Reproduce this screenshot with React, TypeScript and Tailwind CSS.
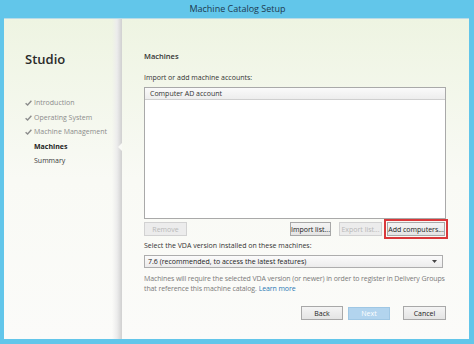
import React from "react";

const Check = () => (
  <svg width="7" height="6" viewBox="0 0 7 6" className="mr-[2px]">
    <path d="M0.6 3.2 L2.6 5 L6.4 0.8" stroke="#8c8c8c" strokeWidth="1.4" fill="none" />
  </svg>
);

const Btn = ({ children, disabled, className = "" }: { children: React.ReactNode; disabled?: boolean; className?: string }) => (
  <div
    className={
      "h-[14px] flex items-center justify-center border text-[7px] leading-none shrink-0 " +
      (disabled ? "border-[#d2d2d2] bg-[#ececec] text-[#b8b8b8] " : "border-[#a8a8a8] bg-gradient-to-b from-[#f4f4f4] to-[#e4e4e4] text-[#222] ") +
      className
    }
  >
    {children}
  </div>
);

export default function App() {
  return (
    <div
      className="w-[474px] h-[344px] bg-[#62c6ea] flex flex-col overflow-hidden"
      style={{ fontFamily: '"Open Sans", "Noto Sans", sans-serif' }}
    >
      <div className="h-[18px] flex items-center justify-center text-[9px] text-[#1d3a50] pl-[1px]">
        Machine Catalog Setup
      </div>
      <div className="flex-1 ml-[4px] mr-[5px] mb-[5px] flex bg-gradient-to-b from-[#eef4e2] via-[#f9faf5] to-[#fbfbf9] border-t border-[#b8dbe8]">
        {/* sidebar */}
        <div className="w-[118px] shrink-0 flex relative">
          <div className="flex-1 flex flex-col pl-[21px]">
            <div className="mt-[32px] text-[13px] font-semibold text-[#2a2a2a] leading-[16px]">Studio</div>
            <div className="mt-[29px] flex flex-col text-[7px] leading-[14.5px]">
              <div className="flex items-center text-[#8c8c8c]"><Check />Introduction</div>
              <div className="flex items-center text-[#8c8c8c]"><Check />Operating System</div>
              <div className="flex items-center text-[#8c8c8c]"><Check />Machine Management</div>
              <div className="pl-[9px] font-bold text-[#1e1e1e]">Machines</div>
              <div className="pl-[9px] text-[#3a3a3a]">Summary</div>
            </div>
          </div>
          <div className="w-[10px] bg-gradient-to-r from-transparent via-[#ececec] to-[#d0d0d0]"></div>
          <div className="absolute right-0 top-[124px] w-0 h-0 border-t-[4px] border-b-[4px] border-r-[4px] border-t-transparent border-b-transparent border-r-[#f9faf6]"></div>
        </div>
        {/* main */}
        <div className="flex-1 min-w-0 flex flex-col pl-[22px] text-[7px] text-[#333]">
          <div className="mt-[32px] h-[10px] leading-[10px] font-semibold text-[7.5px] text-[#333]">Machines</div>
          <div className="mt-[12px] h-[10px] leading-[10px]">Import or add machine accounts:</div>
          <div className="mt-[4px] h-[132px] w-[302px] border border-[#a9a9a9] bg-white flex flex-col">
            <div className="h-[12px] border-b border-[#cfcfcf] bg-gradient-to-b from-[#fafafa] to-[#ededed] flex items-center pl-[5px] leading-none">
              Computer AD account
            </div>
          </div>
          <div className="mt-[3px] flex items-center w-[304px] h-[14px]">
            <Btn disabled className="w-[43px]">Remove</Btn>
            <div className="flex-1"></div>
            <Btn className="w-[41px]">Import list...</Btn>
            <Btn disabled className="w-[43px] ml-[8px]">Export list...</Btn>
            <div className="ml-[2px] border-2 border-[#d9383a] p-[1px] -my-[3px] shrink-0">
              <Btn className="w-[58px] h-[13px]">Add computers...</Btn>
            </div>
          </div>
          <div className="mt-[5px] h-[10px] leading-[10px]">Select the VDA version installed on these machines:</div>
          <div className="mt-[4px] h-[13px] w-[299px] border border-[#adadad] bg-gradient-to-b from-[#fbfbfb] to-[#ececec] flex items-center pl-[3px] pr-[5px] leading-none text-[#222]">
            <span className="flex-1">7.6 (recommended, to access the latest features)</span>
            <svg width="5" height="3" viewBox="0 0 5 3"><path d="M0 0 H5 L2.5 3 Z" fill="#444" /></svg>
          </div>
          <div className="mt-[6px] flex flex-col leading-[10px] text-[#7a7a7a] tracking-[-0.12px]">
            <div className="whitespace-nowrap">Machines will require the selected VDA version (or newer) in order to register in Delivery Groups</div>
            <div className="flex whitespace-nowrap">
              <span>that reference this machine catalog.</span>
              <span className="ml-[2px] text-[#2b79b5]">Learn more</span>
            </div>
          </div>
          <div className="mt-[12px] flex items-center w-[302px] justify-end">
            <Btn className="w-[42px] h-[13px]">Back</Btn>
            <div className="ml-[5px] w-[42px] h-[13px] border border-[#9fc7e4] bg-[#b2d4ee] text-white flex items-center justify-center leading-none">Next</div>
            <Btn className="ml-[13px] w-[43px] h-[13px]">Cancel</Btn>
          </div>
        </div>
      </div>
    </div>
  );
}
